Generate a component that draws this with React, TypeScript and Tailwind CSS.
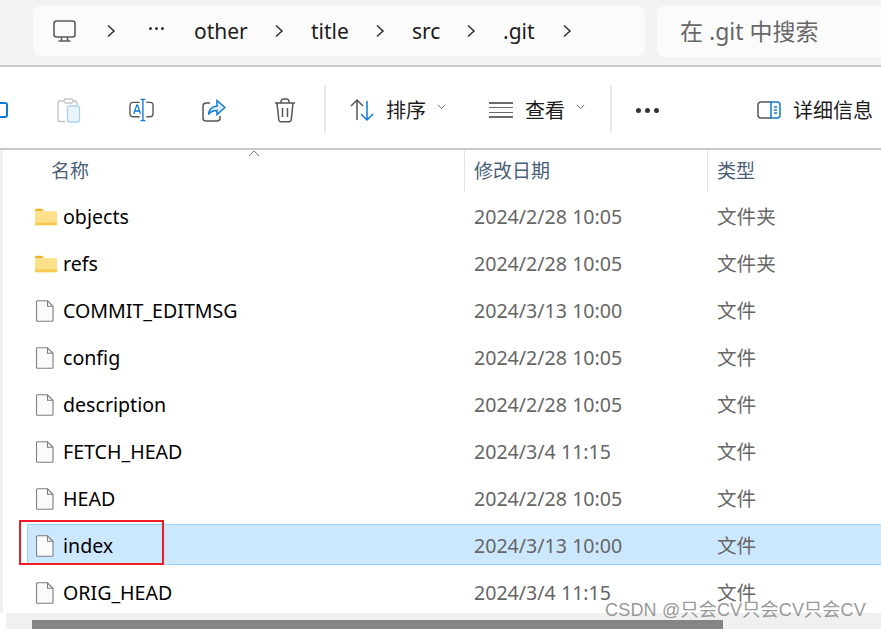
import React from 'react';

const FONT = "font-['Noto_Sans','Noto_Sans_CJK_SC',sans-serif]";

const rows = [
  { name: 'objects', date: '2024/2/28 10:05', type: '文件夹', folder: true },
  { name: 'refs', date: '2024/2/28 10:05', type: '文件夹', folder: true },
  { name: 'COMMIT_EDITMSG', date: '2024/3/13 10:00', type: '文件' },
  { name: 'config', date: '2024/2/28 10:05', type: '文件' },
  { name: 'description', date: '2024/2/28 10:05', type: '文件' },
  { name: 'FETCH_HEAD', date: '2024/3/4 11:15', type: '文件' },
  { name: 'HEAD', date: '2024/2/28 10:05', type: '文件' },
  { name: 'index', date: '2024/3/13 10:00', type: '文件', selected: true },
  { name: 'ORIG_HEAD', date: '2024/3/4 11:15', type: '文件' },
];

function Chevron() {
  return (
    <svg width="10" height="14" viewBox="0 0 10 14" fill="none" stroke="#333" strokeWidth="1.6">
      <path d="M2 1.5 8 7l-6 5.5" />
    </svg>
  );
}

function SmallCaret() {
  return (
    <svg width="9" height="6" viewBox="0 0 9 6" fill="none" stroke="#777" strokeWidth="1">
      <path d="M.8.8 4.5 4.6 8.2.8" />
    </svg>
  );
}

function FolderIcon() {
  return (
    <svg width="22" height="18" viewBox="0 0 23 18">
      <path d="M0 2a1.5 1.5 0 0 1 1.5-1.5h5.5l2.5 2.2H0z" fill="#f2b51f" />
      <path d="M0 3h21.8a1.2 1.2 0 0 1 1.2 1.2v12.3a1 1 0 0 1-1 1H1a1 1 0 0 1-1-1z" fill="#fde08a" />
      <path d="M0 14.8h23v1.7a1 1 0 0 1-1 1H1a1 1 0 0 1-1-1z" fill="#f7c94f" />
    </svg>
  );
}

function FileIcon() {
  return (
    <svg className="-ml-[2px]" width="18" height="22" viewBox="0 0 18 22" fill="#fbfbfb" stroke="#7d7d7d" strokeWidth="1.1">
      <path d="M1.5.8h10l5.5 5.5v14a1 1 0 0 1-1 1H1.500a1 1 0 0 1-1-1V1.800a1 1 0 0 1 1-1z" />
      <path d="M11.500.8v5.500H17" fill="none" />
    </svg>
  );
}

export default function App() {
  return (
    <div className={`relative flex h-[629px] w-[881px] flex-col overflow-hidden bg-white ${FONT}`}>

      {/* ADDRESS BAR */}
      <div className="flex h-[67px] shrink-0 items-start gap-[12px] border-b-2 border-[#c8c8c8] bg-[#f3f3f3] pl-[33px] pt-[6px]">
        <div className="flex h-[50px] w-[612px] items-center rounded-lg bg-[#fbfbfb] text-[21px] text-[#1c1c1c]">
          <svg className="ml-[20px]" width="24" height="23" viewBox="0 0 24 23" fill="none" stroke="#5c5c5c" strokeWidth="1.6">
            <rect x="1" y="1" width="21" height="16" rx="2.500" />
            <path d="M8.500 17v3.500M14.500 17v3.500M5.500 21h12" />
          </svg>
          <div className="ml-[29px]"><Chevron /></div>
          <div className="ml-[33px] mb-[5px] flex gap-[3px]">
            <div className="h-[3px] w-[3px] rounded-full bg-[#333]" />
            <div className="h-[3px] w-[3px] rounded-full bg-[#333]" />
            <div className="h-[3px] w-[3px] rounded-full bg-[#333]" />
          </div>
          <span className="ml-[30px] mt-[1px] w-[54px]">other</span>
          <div className="ml-[26px]"><Chevron /></div>
          <span className="ml-[27px] mt-[1px] w-[38px]">title</span>
          <div className="ml-[26px]"><Chevron /></div>
          <span className="ml-[27px] mt-[1px] w-[28px]">src</span>
          <div className="ml-[26px]"><Chevron /></div>
          <span className="ml-[27px] mt-[1px] w-[32px]">.git</span>
          <div className="ml-[27px]"><Chevron /></div>
        </div>
        <div className="flex h-[51px] flex-1 items-center rounded-l-lg bg-[#fbfbfb] pl-[23px] text-[23px] text-[#666]">
          在 .git 中搜索
        </div>
      </div>

      {/* TOOLBAR */}
      <div className="flex h-[83px] shrink-0 items-center border-b-2 border-[#c8c8c8] pt-[5px] text-[20px] text-[#1c1c1c]">
        <div className="-ml-[4px] h-[16px] w-[12px] rounded-[3px] border-2 border-[#0f7ad6]" />
        <svg className="ml-[49px]" width="24" height="25" viewBox="0 0 24 25" fill="none" strokeWidth="1.300">
          <path d="M8 3H3a2 2 0 0 0-2 2v16.500a2 2 0 0 0 2 2h5M16 3h2a2 2 0 0 1 2 2v2" stroke="#c4c4c4" />
          <rect x="7" y="1" width="9" height="4" rx="1.500" stroke="#c4c4c4" />
          <rect x="10.500" y="8" width="12" height="16" rx="2" stroke="#a9d3f5" fill="#eaf5fd" />
        </svg>
        <svg className="ml-[48px]" width="25" height="24" viewBox="0 0 26 24" fill="none" strokeWidth="1.400">
          <path d="M11 4H4a3 3 0 0 0-3 3v9a3 3 0 0 0 3 3h7M18 4h4a3 3 0 0 1 3 3v9a3 3 0 0 1-3 3h-4" stroke="#555" />
          <path d="M12 1h5M12 23h5M14.500 1v22M5 16l3-9h1l3 9M6 13h5" stroke="#0f7ad6" />
        </svg>
        <svg className="ml-[48px]" width="24" height="23" viewBox="0 0 24 23" fill="none" strokeWidth="1.500">
          <path d="M8 4H4a3 3 0 0 0-3 3v12a3 3 0 0 0 3 3h11a3 3 0 0 0 3-3v-2" stroke="#555" />
          <path d="M15 1.500 23 8.500l-8 7v-4c-4 0-6.500 1-8.500 4 .5-5 3.500-8 8.500-8.500z" stroke="#0f7ad6" fill="#d9ecfb" />
        </svg>
        <svg className="ml-[48px]" width="22" height="25" viewBox="0 0 22 25" fill="none" stroke="#555" strokeWidth="1.500">
          <path d="M1 5h20M7 5V3.500A2.500 2.500 0 0 1 9.500 1h3A2.500 2.500 0 0 1 15 3.500V5M3 5l1.800 17a2 2 0 0 0 2 1.800h8.400a2 2 0 0 0 2-1.800L19 5M8.500 10v9M13.500 10v9" />
        </svg>
        <div className="ml-[28px] mb-[3px] h-[48px] w-[2px] bg-[#e8e8e8]" />
        <svg className="ml-[24px]" width="24" height="24" viewBox="0 0 24 24" fill="none" strokeWidth="1.500">
          <path d="M7 22V2M1 8l6-6 6 6" stroke="#555" />
          <path d="M17 3v19M11 16l6 6 6-6" stroke="#0f7ad6" />
        </svg>
        <span className="ml-[12px] mt-[2px]">排序</span>
        <div className="ml-[11px] mb-[6px]"><SmallCaret /></div>
        <div className="ml-[43px] flex h-[16px] w-[24px] flex-col justify-between">
          <div className="h-[2px] bg-[#6a6a6a]" />
          <div className="h-[1px] bg-[#6a6a6a]" />
          <div className="h-[1px] bg-[#6a6a6a]" />
          <div className="h-[2px] bg-[#6a6a6a]" />
        </div>
        <span className="ml-[12px] mt-[2px]">查看</span>
        <div className="ml-[11px] mb-[6px]"><SmallCaret /></div>
        <div className="ml-[25px] mb-[3px] h-[48px] w-[2px] bg-[#e8e8e8]" />
        <div className="ml-[24px] flex gap-[4px]">
          <div className="h-[5px] w-[5px] rounded-full bg-[#333]" />
          <div className="h-[5px] w-[5px] rounded-full bg-[#333]" />
          <div className="h-[5px] w-[5px] rounded-full bg-[#333]" />
        </div>
        <svg className="ml-[98px]" width="24" height="18" viewBox="0 0 24 18" fill="none" strokeWidth="1.500">
          <path d="M14 1H4a3 3 0 0 0-3 3v10a3 3 0 0 0 3 3h10" stroke="#555" />
          <path d="M14 1h6a3 3 0 0 1 3 3v10a3 3 0 0 1-3 3h-6z" stroke="#0f7ad6" />
          <path d="M17 6h3M17 9h3M17 12h3" stroke="#0f7ad6" />
        </svg>
        <span className="ml-[12px] mt-[2px] whitespace-nowrap">详细信息</span>
      </div>

      {/* COLUMN HEADER */}
      <div className="relative flex h-[42px] shrink-0 items-center border-l-[3px] border-[#f0f0f0] text-[19px] text-[#4a6078]">
        <svg className="absolute left-[245px] top-0" width="12" height="7" viewBox="0 0 12 7" fill="none" stroke="#777" strokeWidth="1">
          <path d="M.8 6 6 1l5.200 5" />
        </svg>
        <div className="flex h-full w-[462px] items-center border-r border-[#e3e3e3] pl-[48px]">名称</div>
        <div className="flex h-full w-[243px] items-center border-r border-[#e3e3e3] pl-[9px]">修改日期</div>
        <div className="flex h-full items-center pl-[9px]">类型</div>
      </div>

      {/* FILE LIST */}
      <div className="min-h-0 flex-1 overflow-hidden border-l-[3px] border-[#f0f0f0] pl-[24px] pt-[1px] text-[19.6px]">
        {rows.map((row) => (
          <div key={row.name} className="flex h-[47px] shrink-0 items-center">
            <div className={`-mt-[2px] flex h-[41px] w-full items-center border-y border-l pt-[2px] ${row.selected ? 'border-[#99d1ff] bg-[#cce8ff]' : 'border-transparent'}`}>
              <div className="flex w-[35px] justify-center">
                {row.folder ? <FolderIcon /> : <FileIcon />}
              </div>
              <span className="w-[411px] text-black">{row.name}</span>
              <span className="w-[243px] text-[#666]">{row.date}</span>
              <span className="text-[#666]">{row.type}</span>
            </div>
          </div>
        ))}
      </div>

      {/* SCROLLBAR */}
      <div className="ml-[6px] flex h-[16px] shrink-0 items-end bg-[#f0f0f0] pl-[26px]">
        <div className="h-[9px] w-[691px] bg-[#858585]" />
      </div>

      {/* ANNOTATION + WATERMARK */}
      <div className="absolute left-[19px] top-[520px] h-[45px] w-[145px] border-2 border-[#ee1c25]" />
      <div className="absolute left-[605px] top-[597px] whitespace-nowrap font-['Liberation_Sans','Noto_Sans_CJK_SC',sans-serif] text-[18px] tracking-[0.2px] text-[#999]">
        CSDN @只会CV只会CV只会CV
      </div>
    </div>
  );
}
